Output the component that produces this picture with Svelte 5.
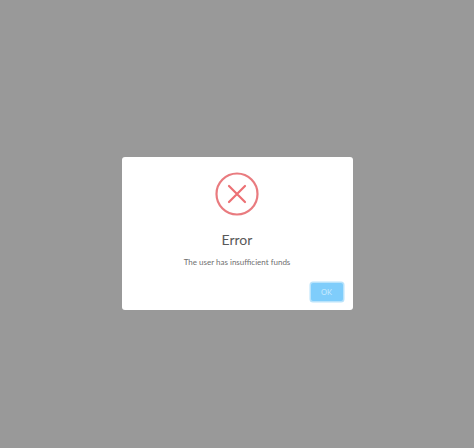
<script>
  const title = 'Error';
  const message = 'The user has insufficient funds';
</script>

<div class="overlay">
  <div class="modal" role="dialog">
    <svg class="icon" width="44" height="44" viewBox="0 0 44 44" aria-hidden="true">
      <circle cx="22" cy="22" r="20.5" fill="none" stroke="#e97b7f" stroke-width="2.2" />
      <path d="M14 14 L30 30 M30 14 L14 30" fill="none" stroke="#ec7074" stroke-width="2.2" stroke-linecap="round" />
    </svg>
    <h2>{title}</h2>
    <p>{message}</p>
    <div class="actions">
      <button type="button">OK</button>
    </div>
  </div>
</div>

<style>
  :global(body) {
    margin: 0;
  }
  .overlay {
    width: 474px;
    height: 448px;
    background: #999999;
    display: flex;
    align-items: flex-start;
    justify-content: center;
    padding-top: 157px;
    box-sizing: border-box;
  }
  .modal {
    width: 231px;
    height: 153px;
    box-sizing: border-box;
    background: #fff;
    border-radius: 3px;
    padding: 15px 10px 9px;
    display: flex;
    flex-direction: column;
    align-items: center;
    font-family: Lato, "Noto Sans", sans-serif;
  }
  .icon {
    flex: none;
  }
  h2 {
    margin: 15px 0 0;
    font-size: 14px;
    line-height: 18px;
    font-weight: 400;
    color: #595959;
  }
  p {
    margin: 7px 0 0;
    font-size: 8px;
    line-height: 12px;
    color: #6f6f6f;
  }
  .actions {
    margin-top: auto;
    align-self: flex-end;
    display: flex;
  }
  button {
    width: 32px;
    height: 18px;
    border: 0;
    padding: 0;
    border-radius: 2px;
    background: #7fcdfb;
    box-shadow: 0 0 0 1.5px #b9e3fb;
    color: #c8ebff;
    font-family: inherit;
    font-size: 7.5px;
  }
</style>
